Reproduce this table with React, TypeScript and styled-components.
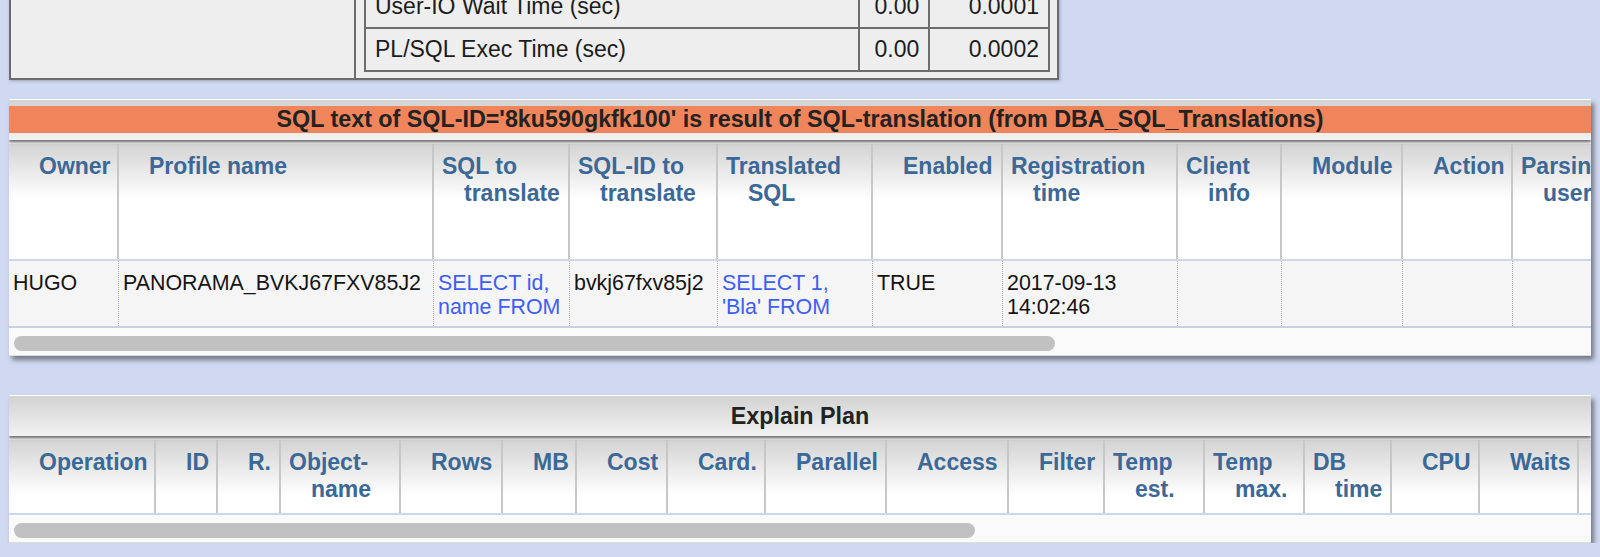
import React from "react";
import styled, { createGlobalStyle, css } from "styled-components";

const GlobalStyle = createGlobalStyle`
  html, body {
    margin: 0;
    padding: 0;
    background: #d1d9f2;
    overflow: hidden;
  }
  body {
    font-family: "Liberation Sans", Arial, Helvetica, sans-serif;
  }
  *, *::before, *::after { box-sizing: border-box; }
`;

const Page = styled.div`
  width: 1600px;
  padding: 0 9px;
  display: flex;
  flex-direction: column;
  align-items: flex-start;
`;

/* ---------- top (previous) box ---------- */
const StatBox = styled.div`
  width: 1050px;
  margin-top: -16px;
  display: flex;
  background: #eeeeee;
  border: 2px solid #6c6c6c;
  border-top: none;
  box-shadow: 1px 1px 3px rgba(0, 0, 0, 0.25);
`;

const StatLeft = styled.div`
  flex: 0 0 345px;
  border-right: 2px solid #6c6c6c;
`;

const StatRight = styled.div`
  flex: 1;
  padding: 0 7px 6px 8px;
`;

const StatTable = styled.table`
  width: 686px;
  border-collapse: collapse;
  font-size: 23px;
  color: #1c1c1c;
`;

const StatCell = styled.td<{ $num?: boolean; $w: number }>`
  width: ${(p) => p.$w}px;
  height: 43px;
  border: 2px solid #6c6c6c;
  padding: 0 9px;
  vertical-align: middle;
  text-align: ${(p) => (p.$num ? "right" : "left")};
  white-space: nowrap;
`;

/* ---------- grid panels ---------- */
const Panel = styled.section<{ $gap: number }>`
  width: 1582px;
  margin-top: ${(p) => p.$gap}px;
  background: #f3f3f3;
  border-top: 1px solid #ffffff;
  box-shadow: 3px 4px 5px rgba(0, 0, 0, 0.45);
  overflow: hidden;
`;

const TitleBar = styled.div<{ $alert?: boolean }>`
  position: relative;
  z-index: 1;
  height: 40px;
  margin-bottom: 4px;
  display: flex;
  align-items: ${(p) => (p.$alert ? "flex-start" : "center")};
  padding-top: ${(p) => (p.$alert ? 6 : 0)}px;
  background: linear-gradient(#d2d2d2, #f2f2f2);
  box-shadow: 0 2px 3px rgba(0, 0, 0, 0.6);
`;

const Caption = styled.div<{ $alert?: boolean }>`
  width: 100%;
  height: 27px;
  line-height: 27px;
  text-align: center;
  font-weight: bold;
  font-size: 23.3px;
  color: #222222;
  white-space: nowrap;
  ${(p) =>
    p.$alert &&
    css`
      background: #f0855b;
    `}
`;

const HeaderRow = styled.div<{ $h: number }>`
  display: flex;
  height: ${(p) => p.$h}px;
  border-bottom: 2px solid #cbd7ea;
  background: linear-gradient(#d3d3d3 0px, #ffffff 55px);
`;

const HeaderCell = styled.div<{ $w: number }>`
  flex: 0 0 ${(p) => p.$w}px;
  border-right: 2px solid #c7c7c7;
  padding: 9px 0 0 30px;
  font-weight: bold;
  font-size: 23px;
  line-height: 27px;
  color: #3b6897;
  white-space: nowrap;
  overflow: hidden;
`;

const HeaderLine = styled.span<{ $hang?: boolean }>`
  display: block;
  margin-left: ${(p) => (p.$hang ? -22 : 0)}px;
`;

const DataRow = styled.div`
  display: flex;
  height: 67px;
  border-bottom: 2px solid #c6d0e0;
  background: #f5f5f5;
`;

const DataCell = styled.div<{ $w: number; $link?: boolean }>`
  flex: 0 0 ${(p) => p.$w}px;
  border-right: 1px dotted #a9a9a9;
  padding: 10px 4px 0 4px;
  font-size: 21.4px;
  line-height: 24px;
  color: ${(p) => (p.$link ? "#3c5ef6" : "#141414")};
  white-space: nowrap;
  overflow: hidden;
`;

const ScrollTrack = styled.div`
  height: 28px;
  padding: 8px 0 0 5px;
  background: #fafafa;
  border-bottom: 1px solid #dcdcdc;
`;

const ScrollThumb = styled.div`
  height: 15px;
  border-radius: 8px;
  background: #c1c1c1;
`;

/* ---------- data ---------- */
type Col = { w: number; lines: string[] };

const translationCols: Col[] = [
  { w: 110, lines: ["Owner"] },
  { w: 315, lines: ["Profile name"] },
  { w: 136, lines: ["SQL to", "translate"] },
  { w: 148, lines: ["SQL-ID to", "translate"] },
  { w: 155, lines: ["Translated", "SQL"] },
  { w: 130, lines: ["Enabled"] },
  { w: 175, lines: ["Registration", "time"] },
  { w: 104, lines: ["Client", "info"] },
  { w: 121, lines: ["Module"] },
  { w: 110, lines: ["Action"] },
  { w: 112, lines: ["Parsing", "user"] },
];

const translationRow: { lines: string[]; link?: boolean }[] = [
  { lines: ["HUGO"] },
  { lines: ["PANORAMA_BVKJ67FXV85J2"] },
  { lines: ["SELECT id,", "name FROM"], link: true },
  { lines: ["bvkj67fxv85j2"] },
  { lines: ["SELECT 1,", "'Bla' FROM"], link: true },
  { lines: ["TRUE"] },
  { lines: ["2017-09-13", "14:02:46"] },
  { lines: [] },
  { lines: [] },
  { lines: [] },
  { lines: [] },
];

const planCols: Col[] = [
  { w: 147, lines: ["Operation"] },
  { w: 62, lines: ["ID"] },
  { w: 63, lines: ["R."] },
  { w: 120, lines: ["Object-", "name"] },
  { w: 102, lines: ["Rows"] },
  { w: 74, lines: ["MB"] },
  { w: 91, lines: ["Cost"] },
  { w: 98, lines: ["Card."] },
  { w: 121, lines: ["Parallel"] },
  { w: 122, lines: ["Access"] },
  { w: 96, lines: ["Filter"] },
  { w: 100, lines: ["Temp", "est."] },
  { w: 100, lines: ["Temp", "max."] },
  { w: 87, lines: ["DB", "time"] },
  { w: 88, lines: ["CPU"] },
  { w: 99, lines: ["Waits"] },
  { w: 100, lines: ["Rem."] },
];

const Header: React.FC<{ cols: Col[]; h: number }> = ({ cols, h }) => (
  <HeaderRow $h={h}>
    {cols.map((c, i) => (
      <HeaderCell key={i} $w={c.w}>
        {c.lines.map((l, j) => (
          <HeaderLine key={j} $hang={c.lines.length > 1 && j === 0}>
            {l}
          </HeaderLine>
        ))}
      </HeaderCell>
    ))}
  </HeaderRow>
);

export default function App() {
  return (
    <>
      <GlobalStyle />
      <Page>
        <StatBox>
          <StatLeft />
          <StatRight>
            <StatTable>
              <tbody>
                <tr>
                  <StatCell $w={496}>User-IO Wait Time (sec)</StatCell>
                  <StatCell $w={70} $num>
                    0.00
                  </StatCell>
                  <StatCell $w={120} $num>
                    0.0001
                  </StatCell>
                </tr>
                <tr>
                  <StatCell $w={496}>PL/SQL Exec Time (sec)</StatCell>
                  <StatCell $w={70} $num>
                    0.00
                  </StatCell>
                  <StatCell $w={120} $num>
                    0.0002
                  </StatCell>
                </tr>
              </tbody>
            </StatTable>
          </StatRight>
        </StatBox>

        <Panel $gap={19}>
          <TitleBar $alert>
            <Caption $alert>
              SQL text of SQL-ID='8ku590gkfk100' is result of SQL-translation (from
              DBA_SQL_Translations)
            </Caption>
          </TitleBar>
          <Header cols={translationCols} h={117} />
          <DataRow>
            {translationCols.map((c, i) => (
              <DataCell key={i} $w={c.w} $link={translationRow[i].link}>
                {translationRow[i].lines.map((l, j) => (
                  <div key={j}>{l}</div>
                ))}
              </DataCell>
            ))}
          </DataRow>
          <ScrollTrack>
            <ScrollThumb style={{ width: 1041 }} />
          </ScrollTrack>
        </Panel>

        <Panel $gap={39}>
          <TitleBar>
            <Caption>Explain Plan</Caption>
          </TitleBar>
          <Header cols={planCols} h={75} />
          <ScrollTrack>
            <ScrollThumb style={{ width: 961 }} />
          </ScrollTrack>
        </Panel>
      </Page>
    </>
  );
}
